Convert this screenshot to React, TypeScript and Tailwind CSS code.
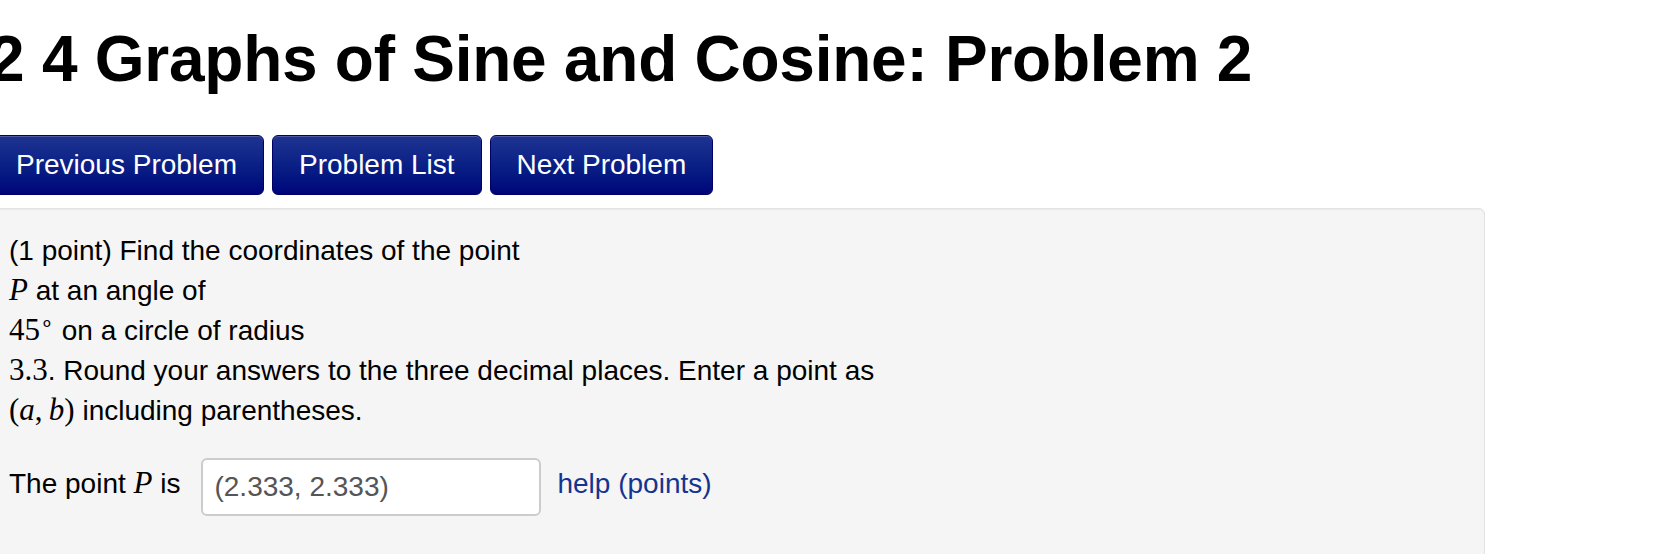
import React from 'react';

const navButtons = ['Previous Problem', 'Problem List', 'Next Problem'];

const M: React.FC<{ children: React.ReactNode; italic?: boolean }> = ({ children, italic }) => (
  <span className={`font-['Liberation_Serif',serif] text-[31px] leading-[0] ${italic ? 'italic' : ''}`}>{children}</span>
);

const App: React.FC = () => {
  return (
    <div className="w-full h-[554px] overflow-hidden bg-white text-black font-['Liberation_Sans',Arial,sans-serif]">
      <div className="-ml-[11px] w-[1496px]">
        {/* Title */}
        <h1 className="mt-[23px] text-[64px] leading-[72px] font-bold tracking-[-0.25px] whitespace-nowrap">
          2 4 Graphs of Sine and Cosine: Problem 2
        </h1>

        {/* Navigation */}
        <div className="mt-[40px] flex gap-[8px]">
          {navButtons.map(label => (
            <button
              key={label}
              className="h-[60px] px-[26px] rounded-[6px] border border-[#000066] bg-gradient-to-b from-[#1e3391] to-[#00037a] text-white text-[28px] leading-none shadow-[inset_0_1px_0_rgba(255,255,255,0.2)]"
            >
              {label}
            </button>
          ))}
        </div>

        {/* Problem body */}
        <div className="mt-[13px] h-[400px] rounded-[6px] border border-[#e3e3e3] bg-[#f5f5f5] shadow-[inset_0_1px_1px_rgba(0,0,0,0.05)] pl-[19px] pt-[22px] text-[28px] leading-[40px]">
          <div>(1 point) Find the coordinates of the point</div>
          <div>
            <M italic>P</M> at an angle of
          </div>
          <div>
            <M>45</M>
            <span className="font-['Liberation_Serif',serif] text-[22px] leading-[0] align-[10px]">∘</span> on a circle of radius
          </div>
          <div>
            <M>3.3</M>. Round your answers to the three decimal places. Enter a point as
          </div>
          <div>
            <M>
              (<i>a</i>,&thinsp;<i>b</i>)
            </M>{' '}
            including parentheses.
          </div>

          <div className="mt-[27px] flex items-center">
            <span className="mb-[6px]">
              The point <M italic>P</M> is
            </span>
            <input
              readOnly
              value="(2.333, 2.333)"
              className="ml-[21px] w-[340px] h-[58px] px-[11px] rounded-[6px] border-2 border-[#cccccc] bg-white text-[#555555] text-[28px] outline-none font-['Liberation_Sans',Arial,sans-serif]"
            />
            <a className="ml-[16px] mb-[6px] text-[#15348f]">help (points)</a>
          </div>
        </div>
      </div>
    </div>
  );
};

export default App;
